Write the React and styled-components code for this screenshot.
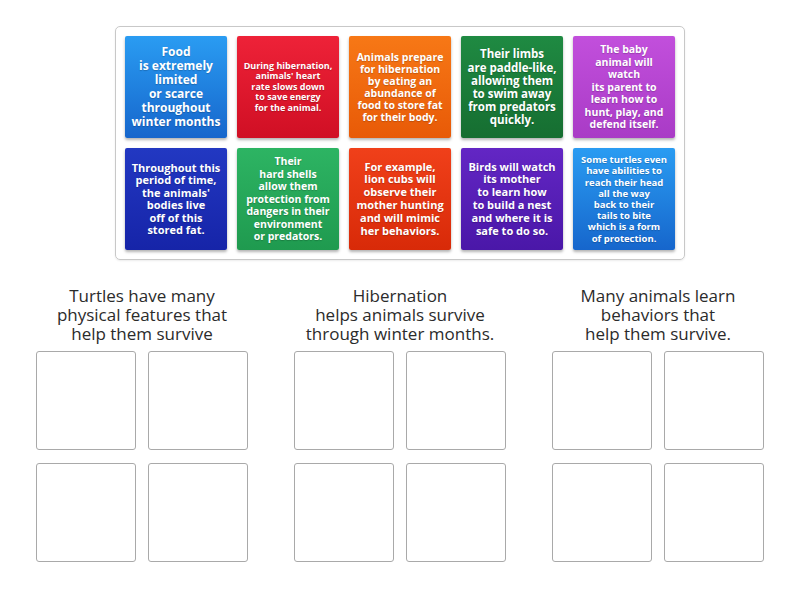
import styled, { createGlobalStyle } from "styled-components";

const GlobalStyle = createGlobalStyle`
  body {
    margin: 0;
    background: #ffffff;
    font-family: "Open Sans", "Noto Sans", sans-serif;
  }
`;

const Page = styled.div`
  display: flex;
  flex-direction: column;
  align-items: center;
  padding-top: 26px;
`;

const Tray = styled.div`
  display: grid;
  grid-template-columns: repeat(5, 102px);
  grid-auto-rows: 102px;
  gap: 10px;
  padding: 9px;
  border: 1px solid #c8c8c8;
  border-radius: 5px;
  box-shadow: 0 1px 2px rgba(0, 0, 0, 0.08);
`;

const Card = styled.div`
  display: flex;
  align-items: center;
  justify-content: center;
  padding: 2px 3px;
  border-radius: 2px;
  background: linear-gradient(
    to bottom,
    ${(p) => p.$top},
    ${(p) => p.$bottom}
  );
  box-shadow: 0 2px 3px rgba(0, 0, 0, 0.3);
  color: #ffffff;
  font-weight: 700;
  font-size: ${(p) => p.$size}px;
  line-height: ${(p) => p.$lh}px;
  text-align: center;
  white-space: pre-line;
  text-shadow: 0 1px 1px rgba(0, 0, 0, 0.2);
`;

const Groups = styled.div`
  display: flex;
  gap: 47px;
  margin-top: 26px;
`;

const Group = styled.div`
  display: flex;
  flex-direction: column;
  align-items: center;
  width: 211px;
`;

const GroupTitle = styled.div`
  height: 57px;
  margin-bottom: 8px;
  color: #2b2b2b;
  font-size: 17px;
  line-height: 19px;
  text-align: center;
  white-space: pre-line;
`;

const Slots = styled.div`
  display: grid;
  grid-template-columns: repeat(2, 100px);
  grid-auto-rows: 99px;
  gap: 13px 12px;
`;

const Slot = styled.div`
  border: 1px solid #a9a9a9;
  border-radius: 3px;
  background: #ffffff;
`;

const cards = [
  { text: "Food\nis extremely\nlimited\nor scarce\nthroughout\nwinter months", top: "#2a9cf2", bottom: "#1666cc", size: 12, lh: 14 },
  { text: "During hibernation,\nanimals' heart\nrate slows down\nto save energy\nfor the animal.", top: "#ee2238", bottom: "#d00f24", size: 9, lh: 10.5 },
  { text: "Animals prepare\nfor hibernation\nby eating an\nabundance of\nfood to store fat\nfor their body.", top: "#f77816", bottom: "#e85a07", size: 10.5, lh: 12 },
  { text: "Their limbs\nare paddle-like,\nallowing them\nto swim away\nfrom predators\nquickly.", top: "#1f8a42", bottom: "#166e31", size: 11.5, lh: 13.2 },
  { text: "The baby\nanimal will\nwatch\nits parent to\nlearn how to\nhunt, play, and\ndefend itself.", top: "#c24fdc", bottom: "#a93bc6", size: 10.5, lh: 12.5 },
  { text: "Throughout this\nperiod of time,\nthe animals'\nbodies live\noff of this\nstored fat.", top: "#2238c2", bottom: "#1624a8", size: 11, lh: 12.5 },
  { text: "Their\nhard shells\nallow them\nprotection from\ndangers in their\nenvironment\nor predators.", top: "#2db463", bottom: "#1f9a4f", size: 10.5, lh: 12.5 },
  { text: "For example,\nlion cubs will\nobserve their\nmother hunting\nand will mimic\nher behaviors.", top: "#f0401a", bottom: "#d82a08", size: 11, lh: 12.8 },
  { text: "Birds will watch\nits mother\nto learn how\nto build a nest\nand where it is\nsafe to do so.", top: "#6326c4", bottom: "#4a17a8", size: 11, lh: 12.8 },
  { text: "Some turtles even\nhave abilities to\nreach their head\nall the way\nback to their\ntails to bite\nwhich is a form\nof protection.", top: "#2a9cf2", bottom: "#1666cc", size: 9.5, lh: 11.2 },
];

const groups = [
  "Turtles have many\nphysical features that\nhelp them survive",
  "Hibernation\nhelps animals survive\nthrough winter months.",
  "Many animals learn\nbehaviors that\nhelp them survive.",
];

export default function App() {
  return (
    <>
      <GlobalStyle />
      <Page>
        <Tray>
          {cards.map((c, i) => (
            <Card key={i} $top={c.top} $bottom={c.bottom} $size={c.size} $lh={c.lh}>
              {c.text}
            </Card>
          ))}
        </Tray>
        <Groups>
          {groups.map((title) => (
            <Group key={title}>
              <GroupTitle>{title}</GroupTitle>
              <Slots>
                <Slot />
                <Slot />
                <Slot />
                <Slot />
              </Slots>
            </Group>
          ))}
        </Groups>
      </Page>
    </>
  );
}
